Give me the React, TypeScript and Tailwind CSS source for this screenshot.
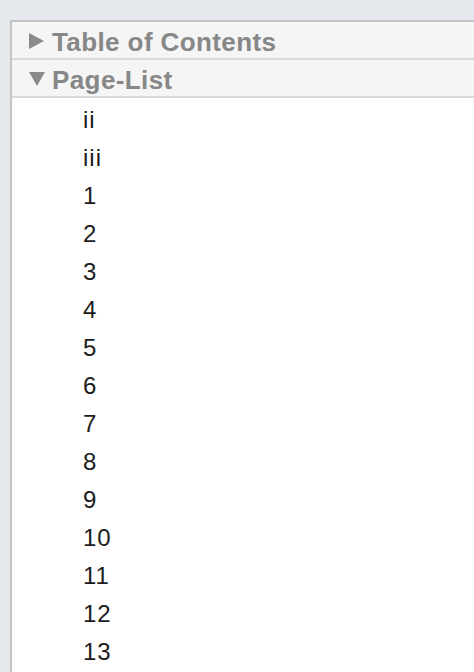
import React from "react";

const items = ["ii", "iii", "1", "2", "3", "4", "5", "6", "7", "8", "9", "10", "11", "12", "13"];

function Header({ open, label }: { open: boolean; label: string }) {
  return (
    <div className="flex h-[38px] items-center border-b-2 border-[#dadada] bg-[#f5f5f5]">
      <div className="ml-[17px] flex w-[23px] items-center pt-[1px]">
        {open ? (
          <svg width="16" height="14" viewBox="0 0 16 14" className="mt-[1px]">
            <polygon points="0,0 16,0 8,14" fill="#8a8a8a" />
          </svg>
        ) : (
          <svg width="15" height="16" viewBox="0 0 15 16">
            <polygon points="0,0 15,8 0,16" fill="#8a8a8a" />
          </svg>
        )}
      </div>
      <span className="pt-[3px] text-[26px] font-bold leading-none tracking-[0.4px] text-[#878787]">{label}</span>
    </div>
  );
}

export default function App() {
  return (
    <div
      className="h-[672px] w-[474px] overflow-hidden bg-[#e5e8ec] pl-[10px] pt-[20px]"
      style={{ fontFamily: '"Liberation Sans", Arial, sans-serif' }}
    >
      <div className="h-full border-l-2 border-t-2 border-[#c4c4c4] bg-white">
        <Header open={false} label="Table of Contents" />
        <Header open={true} label="Page-List" />
        <ul className="pl-[71px] pt-[3px]">
          {items.map((it) => (
            <li key={it} className="flex h-[38px] items-center text-[24px] tracking-[1px] text-[#1c1c1c]">
              {it}
            </li>
          ))}
        </ul>
      </div>
    </div>
  );
}
